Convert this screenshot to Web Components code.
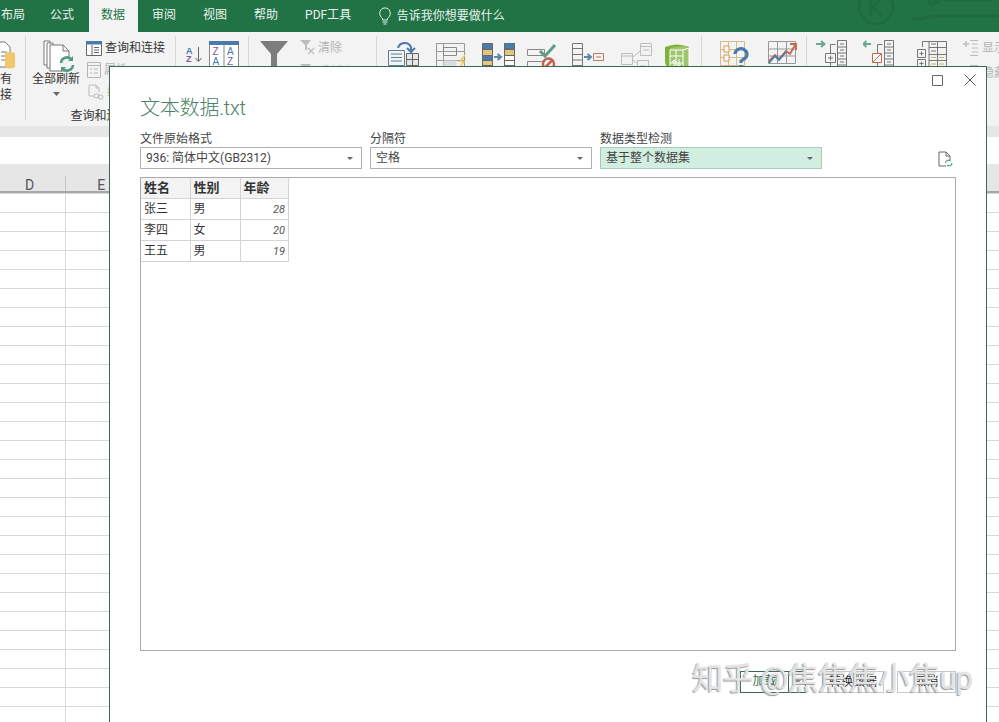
<!DOCTYPE html>
<html lang="zh"><head><meta charset="utf-8"><title>文本数据.txt</title>
<style>
html,body{margin:0;padding:0;height:722px;overflow:hidden;background:#fff}
body{font:12px/16px Roboto,"Noto Sans CJK SC",sans-serif;color:#333}
</style></head><body>
<x-app></x-app>
<script>
const CJK='Roboto,"Noto Sans CJK SC",sans-serif';
function def(name,css,html,init){
  customElements.define(name,class extends HTMLElement{
    constructor(){super();const r=this.attachShadow({mode:'open'});
      r.innerHTML=`<style>${css}</style>${typeof html==='function'?html(this):html}`;}
    connectedCallback(){if(init)init(this);}
  });
}
def('x-tabs',`
:host{display:flex;height:32px;background:#217346;color:#e9f2ed;position:relative;padding-left:1px;box-sizing:border-box;overflow:hidden;font-size:12px;line-height:31px}
span{margin:0 1px;padding:0 12.5px;white-space:nowrap}
span:first-of-type{margin-left:0;padding-left:0;padding-right:10.5px}
.on{background:#f3f3f3;color:#217346}
.tell{display:flex;align-items:center;gap:6px;margin-left:14px;padding:0}
svg.deco{position:absolute;left:850px;top:0}
`,`<span>布局</span><span>公式</span><span class="on">数据</span><span>审阅</span><span>视图</span><span>帮助</span><span>PDF工具</span>
<span class="tell"><svg width="12" height="18" viewBox="0 0 12 18" fill="none" stroke="#e9f2ed" stroke-width="1"><path d="M3.5 11.5C2 10 .7 8.7.7 6.2a5.3 5.3 0 0 1 10.6 0c0 2.500-1.300 3.800-2.800 5.300v1.500h-5z"/><path d="M3.500 15h5M4.500 17h3"/></svg>告诉我你想要做什么</span>
<svg class="deco" width="149" height="32" fill="none" stroke="#1f6a40" stroke-width="3"><circle cx="26" cy="7" r="17"/><path d="M21-2v18M32-2l-9 9 9 9" stroke-width="3"/><path d="M82 2h8m2-2h50M90 16c-8 0-14 0-20 3l-8 0M90 16h60"/><circle cx="82" cy="2" r="3"/></svg>`);

const IC={
 file:`<svg width="25" height="32" viewBox="0 0 25 32"><path d="M-1 2h6l5 5v20h-11" fill="#fff" stroke="#777"/><path d="M1 12h6M1 16h6M1 20h6" stroke="#777"/><path d="M5 13q5-2 10 0v14q-5 3-10 0z" fill="#f2c66c"/></svg>`,
 refresh:`<svg width="32" height="32" viewBox="0 0 32 32" fill="none"><path d="M1 1h6v24H1z" stroke="#777" fill="#fff"/><path d="M4 3h6v25H4z" stroke="#777" fill="#fff"/><path d="M7 5h13l6 6v20H7z" stroke="#777" fill="#fff"/><path d="M20 5v6h6" stroke="#777"/><circle cx="24" cy="24" r="7" fill="#f3f3f3"/><path d="M18 23a6 6 0 0 1 10.500-3.500M30 25a6 6 0 0 1-10.500 3.500" stroke="#4f9a7d" stroke-width="2.600"/><path d="M30 16v5h-5zM18 32v-5h5z" fill="#4f9a7d"/></svg>`,
 query:`<svg width="16" height="15" viewBox="0 0 16 15" fill="none" stroke="#666"><path d="M.5.500h15v14H.5z" fill="#fff"/><path d="M0 0h16v3.500H0z" fill="#4a7bab" stroke="none"/><path d="M6 4v10M8 6.500h5M8 9h5M8 11.500h5"/></svg>`,
 props:`<svg width="14" height="16" viewBox="0 0 14 16" fill="none" stroke="#b5b5b5"><path d="M.5.500h13v15H.5z"/><path d="M.5 3.500h13M3 7h2M7 7h4M3 11h2M7 11h4"/></svg>`,
 links:`<svg width="16" height="17" viewBox="0 0 16 17" fill="none" stroke="#bbb"><path d="M6 12H1V1h7l3 3v4M8 1v3h3"/><rect x="6" y="10" width="5" height="4" rx="2"/><rect x="10" y="11" width="5" height="4" rx="2"/></svg>`,
 az:`<svg width="16" height="17" viewBox="0 0 16 17" font-family="Liberation Sans" font-size="9" font-weight="700"><text x="0" y="8" fill="#4a7bab">A</text><text x="0" y="16" fill="#7a5aa0">Z</text><path d="M12.500 1v14M9.500 12l3 3.500 3-3.500" fill="none" stroke="#666"/></svg>`,
 za:`<svg width="30" height="26" viewBox="0 0 30 26" font-family="Liberation Sans" font-size="10"><path d="M.5.500h29v25H.5zM15 .5v25" fill="#fff" stroke="#888"/><path d="M0 0h30v4H0z" fill="#4a7bab"/><text x="3.500" y="14" fill="#7a5aa0">Z</text><text x="3.500" y="24" fill="#4a7bab">A</text><text x="18" y="14" fill="#4a7bab">A</text><text x="18" y="24" fill="#7a5aa0">Z</text></svg>`,
 funnel:`<svg width="28" height="28" viewBox="0 0 28 28"><path d="M0 0h28L17 13v15h-6V13z" fill="#7d7d7d"/></svg>`,
 clear:`<svg width="16" height="16" viewBox="0 0 16 16"><path d="M0 0h11L7 5v5H5V5z" fill="#bdbdbd"/><path d="M8 8l6 6M14 8l-6 6" stroke="#bdbdbd" stroke-width="1.300"/></svg>`,
 reapply:`<svg width="16" height="16" viewBox="0 0 16 16"><path d="M0 0h11L7 5v5H5V5z" fill="#bdbdbd"/></svg>`,
 split:`<svg width="32" height="28" viewBox="0 0 32 28" fill="none" stroke="#666"><path d="M1.500 11.500h16v15h-16zM4 15h11M4 18.500h11M4 22h11" stroke="#5a7f99"/><path d="M19.500 14.500h12v12h-12zM19.500 20.500h12M25.500 14.500v12" fill="#e8e8e8"/><path d="M11 9a7 7 0 0 1 13-1l0 4" stroke="#4a7bab" stroke-width="2"/><path d="M20 9l4 4 4-4" stroke="#4a7bab" stroke-width="2"/></svg>`,
 flash:`<svg width="30" height="28" viewBox="0 0 30 28" fill="none" stroke="#999"><path d="M.5.500h28v26H.5zM.5 8.500h28M.5 17.500h28M7.500.5v26"/><path d="M7.500 4.500h13v8h-13z" stroke="#888"/><path d="M7.500 17.500h13v9h-13z" fill="#ddd" stroke="none"/><path d="M29 11l-7 8h4l-4 8 8-9h-4l4-7z" fill="#f3c86a" stroke="none"/></svg>`,
 dup:`<svg width="33" height="28" viewBox="0 0 33 28"><g stroke="#666"><path d="M.5.500h10v27H.5z" fill="#4a7bab"/><path d="M.5 6.500h10v6H.5zM.5 17.500h10v5H.5z" fill="#e3c57e"/><path d="M22.500.500h10v27h-10z" fill="#fff"/><path d="M22.500 0h10v6h-10z" fill="#4a7bab"/><path d="M22.500 6.500h10v6h-10z" fill="#e3c57e"/><path d="M22.500 17.500h10M22.500 22.500h10" fill="none"/></g><path d="M12 14h6M15.500 11l3.500 3-3.500 3" fill="none" stroke="#5b89ab" stroke-width="2"/></svg>`,
 valid:`<svg width="30" height="28" viewBox="0 0 30 28" fill="none"><path d="M.5 6.500h17v6H.5zM.5 18.500h17v6H.5z" stroke="#888"/><path d="M13 8l5 5L28 2" stroke="#5f9c85" stroke-width="3"/><circle cx="21.500" cy="21" r="5.500" fill="#fff" stroke="#c0634f" stroke-width="2.500"/><path d="M18 24.500l7-7" stroke="#c0634f" stroke-width="2.500"/></svg>`,
 merge:`<svg width="33" height="28" viewBox="0 0 33 28" fill="none"><path d="M.5.500h10v27H.5zM.5 5.500h10M.5 11.500h10M.5 17h10M.5 22.500h10" stroke="#777"/><path d="M12 14h6M15.500 11l3.500 3-3.500 3" stroke="#5b89ab" stroke-width="2"/><path d="M21.500 10.500h10v7h-10z" stroke="#bf7a68"/><path d="M24 14h5" stroke="#bf7a68"/></svg>`,
 rel:`<svg width="31" height="28" viewBox="0 0 31 28" fill="none" stroke="#bdbdbd"><path d="M.5 10.500h11v11H.5zM.5 13h11M19.500.5h11v12h-11zM19.500 3.500h11M22 7h6M16.500 17.500h11v10h-11zM19 23h6"/><path d="M12 14l7-6M12 17l4 3"/></svg>`,
 pivot:`<svg width="28" height="28" viewBox="0 0 28 28"><path d="M2 4q12-5 24 0v22H8q-6-2-6-8z" fill="#7fb23b"/><path d="M7 5l13-2 6 2v22H7z" fill="#fff" opacity=".25"/><path d="M7 7h13v20H7zM20 7l6-2v22h-6M7 13h13M7 20h13M13 7v20" fill="none" stroke="#fff"/><path d="M11 23v-6m0 0l-2 2m2-2l2 2M16 16v7m0 0l-2-2m2 2l2-2" stroke="#fff" fill="none"/></svg>`,
 what:`<svg width="29" height="28" viewBox="0 0 29 28" fill="none"><path d="M.5.500h24v24H.5zM.5 8.500h24M.5 16.500h24M8.500.5v24M16.500.5v24" stroke="#d8b98a"/><path d="M4 5h5v6H4zM4 14h5v6H4z" stroke="#d49a45" fill="#fff"/><path d="M15 13a6 5.500 0 1 1 9 5l-3 2v2" stroke="#4a7bab" stroke-width="3.200"/><path d="M21 24v4" stroke="#4a7bab" stroke-width="3.200"/></svg>`,
 chart:`<svg width="29" height="28" viewBox="0 0 29 28" fill="none"><path d="M.5.500h27v22H.5zM.5 8h27M.5 15h27M9.500.5v22M18.500.5v22" stroke="#999"/><path d="M1 20l6-6 4 4 7-8 4 3 5-9" stroke="#c4674a" stroke-width="1.800"/><path d="M1 22l6-7 4 4 7-8" stroke="#4a7bab" stroke-width="1.800"/><path d="M22 3h6v6" stroke="#c4674a" stroke-width="1.800"/></svg>`,
 group:`<svg width="31" height="28" viewBox="0 0 31 28" fill="none"><path d="M0 4h8M5 1l3.500 3L5 7" stroke="#6da892" stroke-width="2"/><path d="M14.500 4.500h5M14.500 4.500v9m0 9v6" stroke="#777"/><path d="M9.500 13.500h10v9h-10zM12 18h5M14.500 15.500v5" stroke="#777"/><path d="M21.500 .5h9v28h-9zM21.500 7h9M21.500 13h9M21.500 19h9M21.500 25h9M24 4h4M24 10h4M24 16h4M24 22h4" stroke="#777"/></svg>`,
 ungroup:`<svg width="31" height="28" viewBox="0 0 31 28" fill="none"><path d="M8 4H0M3.500 1L0 4l3.500 3" stroke="#6da892" stroke-width="2"/><path d="M14.500 4.500h5M14.500 4.500v9m0 9v6" stroke="#777"/><path d="M9.500 13.500h9v9h-9z" stroke="#c4674a" fill="#fff"/><path d="M10 22l8-8" stroke="#c4674a"/><path d="M21.500 .5h9v28h-9zM21.500 7h9M21.500 13h9M21.500 19h9M21.500 25h9M24 4h4M24 10h4M24 16h4M24 22h4" stroke="#777"/></svg>`,
 subtotal:`<svg width="30" height="28" viewBox="0 0 30 28" fill="none" stroke="#777"><path d="M5.500 7V1.500h24v27h-18M12 1.500v27M20.500 1.500v27M12 7.500h17.500M12 14.500h17.500M12 20.500h17.500"/><path d="M.5 9.500h8v8h-8zM.5 19.500h8v8h-8zM2.500 13.500h4M4.500 11.500v4M2.500 23.500h4M4.500 21.500v4"/><path d="M14 4h5M14 11h5" stroke="#777"/><path d="M14 17.500h5M22 17.500h5M14 24h5M22 24h5" stroke="#cdb45f"/></svg>`,
 show:`<svg width="16" height="16" viewBox="0 0 16 16" fill="none" stroke="#bdbdbd"><path d="M0 4h6M3 1v6" stroke-width="1.500"/><path d="M7 .5h8M9 4h6M9 8h6M9 12h6M7 15.500h8"/></svg>`,
 hide:`<svg width="16" height="16" viewBox="0 0 16 16" fill="none" stroke="#bdbdbd"><path d="M0 4h6" stroke-width="1.500"/><path d="M7 .5h8M9 4h6"/></svg>`
};
def('x-ribbon',`
:host{display:flex;height:94px;background:#f3f3f3;box-sizing:border-box;overflow:hidden;font-size:12px;line-height:16px;color:#333}
.g{flex:none;display:flex;flex-direction:column;border-right:1px solid #d8d8d8;margin:4px 0 6px;box-sizing:border-box;height:84px}
.c{flex:1;display:flex;align-items:flex-start;padding-top:4px}
.l{text-align:center;height:14px;line-height:14px;white-space:nowrap;margin-bottom:-3px;margin-top:3px}
.big{display:flex;flex-direction:column;align-items:center;flex:none}
svg{display:block;flex:none}
.rows{display:flex;flex-direction:column;gap:6px;flex:none}
.row{display:flex;align-items:center;gap:3px;height:16px;white-space:nowrap}
.off{color:#b4b4b4}
.i{flex:none}
`,`
<div class="g" style="width:26px"><div class="c"><div class="big" style="align-items:flex-start;width:25px">${IC.file}<div style="margin-top:-1px;width:12px">有<br>接</div></div></div></div>
<div class="g" style="width:150px"><div class="c">
  <div class="big" style="margin-left:6px;width:48px"><div style="margin-left:6px">${IC.refresh}</div><div style="margin-top:-1px">全部刷新</div><svg width="7" height="4" style="margin-top:5px"><path d="M0 0h7L3.500 4z" fill="#666"/></svg></div>
  <div class="rows" style="margin-left:6px">
    <div class="row">${IC.query}<span>查询和连接</span></div>
    <div class="row off" style="margin-left:1px">${IC.props}<span>属性</span></div>
    <div class="row off" style="margin-left:2px">${IC.links}<span>编辑链接</span></div>
  </div></div><div class="l">查询和连接</div></div>
<div class="g" style="width:73px"><div class="c">
  <div style="margin:6px 0 0 10px">${IC.az}</div><div style="margin:1px 0 0 7px">${IC.za}</div></div></div>
<div class="g" style="width:128px"><div class="c">
  <div style="margin:1px 0 0 11px">${IC.funnel}</div>
  <div class="rows off" style="margin:0 0 0 12px;gap:8px"><div class="row" style="gap:2px">${IC.clear}<span>清除</span></div><div class="row" style="gap:2px">${IC.reapply}<span>重新应用</span></div></div></div></div>
<div class="g" style="width:325px"><div class="c" style="padding-top:3px">
  <div class="i" style="margin-left:10px">${IC.split}</div><div class="i" style="margin-left:17px;margin-top:4px">${IC.flash}</div><div class="i" style="margin-left:16px;margin-top:4px">${IC.dup}</div><div class="i" style="margin-left:12px;margin-top:4px">${IC.valid}</div><div class="i" style="margin-left:15px;margin-top:4px">${IC.merge}</div><div class="i" style="margin-left:16px;margin-top:4px">${IC.rel}</div><div class="i" style="margin-left:11px;margin-top:4px">${IC.pivot}</div></div></div>
<div class="g" style="width:105px"><div class="c" style="padding-top:5px"><div class="i" style="margin-left:18px">${IC.what}</div><div class="i" style="margin-left:19px">${IC.chart}</div></div></div>
<div class="g" style="flex:1;min-width:0;border:0;overflow:hidden"><div class="c" style="padding-top:4px">
  <div class="i" style="margin-left:9px">${IC.group}</div><div class="i" style="margin-left:16px">${IC.ungroup}</div><div class="i" style="margin-left:23px">${IC.subtotal}</div>
  <div class="rows off" style="margin-left:16px;gap:9px;flex:none"><div class="row">${IC.show}<span>显示明细数据</span></div><div class="row">${IC.hide}<span>隐藏明细数据</span></div></div></div></div>
`);
def('x-sheet',`
:host{display:flex;flex-direction:column;flex:1;min-height:0;font-size:14px}
.strip{height:11px;background:#e6e6e6;flex:none}
.fx{height:27px;background:#fff;flex:none}
.head{height:29px;background:#e6e6e6;border-bottom:2px solid #a6a6a6;display:flex;flex:none;box-sizing:border-box;color:#555}
.head span{width:71.500px;flex:none;display:flex;align-items:flex-start;justify-content:center;box-sizing:border-box;line-height:19px;height:15px;margin-top:12px;border-right:1px solid #c4c4c4}
.head span:first-child{width:66px;padding-right:6px}
.grid{flex:1;background-color:#fff;background-image:repeating-linear-gradient(to bottom,#d8d8d8 0 1px,transparent 1px 19px),linear-gradient(to right,transparent 65px,#d8d8d8 65px 66px,transparent 66px);}
`,`<div class="strip"></div><div class="fx"></div><div class="head"><span>D</span><span>E</span></div><div class="grid"></div>`);
def('x-select',`
:host{display:flex;flex-direction:column;width:222px;flex:none;font-size:12px;color:#444}
label{line-height:16px;height:16px}
.b{height:22px;box-sizing:border-box;border:1px solid #b0b0b0;display:flex;align-items:center;justify-content:space-between;padding:1px 8px 0 5px;line-height:20px;background:#fff}
:host([on]) .b{background:#d2eee0;border-color:#a8cbb8}
svg{display:block}
`,h=>`<label>${h.getAttribute('label')}</label><div class="b"><span>${h.getAttribute('value')}</span><svg width="6" height="3"><path d="M0 0h6L3 3z" fill="#666"/></svg></div>`);
def('x-data-table',`
:host{display:block;font-size:12px;color:#333}
table{border-collapse:collapse;table-layout:fixed;width:148px}
td,th{border:1px solid #d4d4d4;height:21px;padding:0 3px;box-sizing:border-box;text-align:left;line-height:18px}
tr>*:first-child{border-left:0;width:49px}tr>*:nth-child(2){width:50px}
tr:first-child>*{border-top:0}
th{background:#f3f3f3;font-weight:700;color:#333;font-size:13px;padding-top:1px;height:21px}
td.n{text-align:right;font-style:italic;font-size:11px;color:#555;padding-right:3px;padding-top:2px}
`,`<table><tr><th>姓名</th><th>性别</th><th>年龄</th></tr>
<tr><td>张三</td><td>男</td><td class="n">28</td></tr>
<tr><td>李四</td><td>女</td><td class="n">20</td></tr>
<tr><td>王五</td><td>男</td><td class="n">19</td></tr></table>`);
def('x-button',`
:host{display:flex;height:22px;box-sizing:border-box;border:1px solid #c8c8c8;background:#fff;align-items:center;justify-content:center;font-size:12px;color:#222;flex:none}
:host([primary]){border-color:#3a6b52;color:#2f6f50;justify-content:flex-start}
.m{flex:1;text-align:center;height:100%;line-height:19px}
.s{width:17px;height:100%;border-left:1px solid #3a6b52;display:flex;align-items:center;justify-content:center;box-sizing:border-box}
`,h=>h.hasAttribute('primary')?`<div class="m"><slot></slot></div><div class="s"><svg width="7" height="4"><path d="M0 0h7L3.500 4z" fill="#888"/></svg></div>`:`<slot></slot>`);
def('x-dialog',`
:host{position:absolute;left:109px;top:66px;width:878px;height:670px;box-sizing:border-box;background:#fff;border:1px solid #3a6b52;border-width:1.500px 1.500px 0 1.500px;display:flex;flex-direction:column;padding:0 30px 0 30px;font-size:12px;color:#444}
.ctl{position:absolute;right:10px;top:7px;display:flex;gap:21px;align-items:center}
svg{display:block}
h1{font-weight:300;font-size:20px;line-height:28px;margin:27px 0 0;color:#4c8167;height:28px;letter-spacing:-.2px;font-family:Roboto,"Noto Sans CJK SC",sans-serif}
.sel{display:flex;gap:8px;margin-top:8.500px;position:relative;align-items:flex-end}
.rf{position:absolute;right:3px;bottom:2px}
.box{height:474px;box-sizing:border-box;border:1px solid #aaa;margin-top:8px;flex:none}
.btns{display:flex;justify-content:flex-end;gap:13px;margin-top:20px}
`,`<div class="ctl"><svg width="11" height="11" fill="none" stroke="#666"><path d="M.5.500h10v10H.5z"/></svg><svg width="12" height="12" fill="none" stroke="#555"><path d="M.5.500l11 11M11.500.500l-11 11"/></svg></div>
<h1>文本数据.txt</h1>
<div class="sel"><x-select label="文件原始格式" value="936: 简体中文(GB2312)"></x-select><x-select label="分隔符" value="空格"></x-select><x-select label="数据类型检测" value="基于整个数据集" on></x-select>
<svg class="rf" width="15" height="16" viewBox="0 0 15 16" fill="none"><path d="M8 15H1V1h7l4 4v4M8 1v4h4" stroke="#666"/><path d="M7.500 12a3 3 0 0 1 5-2M14 12a3 3 0 0 1-5 2" stroke="#4f9a7d" stroke-width="1.200"/></svg></div>
<div class="box"><x-data-table></x-data-table></div>
<div class="btns"><x-button primary style="width:66px">加载</x-button><x-button style="width:62px;margin-left:3px">转换数据</x-button><x-button style="width:59px">取消</x-button></div>`);
def('x-watermark',`
:host{position:absolute;left:692px;top:658px;font-size:31px;line-height:42px;white-space:nowrap;color:rgba(245,245,245,.8);text-shadow:-1px 1px 1px #9a9a9a,0 0 1px #b5b5b5;pointer-events:none;font-family:Roboto,"Noto Sans CJK SC",sans-serif;letter-spacing:-.6px}
`,`<slot></slot>`);
def('x-app',`
:host{display:flex;flex-direction:column;position:relative;width:999px;height:722px;overflow:hidden;font-family:${CJK}}
`,`<x-tabs></x-tabs><x-ribbon></x-ribbon><x-sheet></x-sheet><x-dialog></x-dialog><x-watermark>知乎 @焦焦焦小焦up</x-watermark>`);
</script>
</body></html>
